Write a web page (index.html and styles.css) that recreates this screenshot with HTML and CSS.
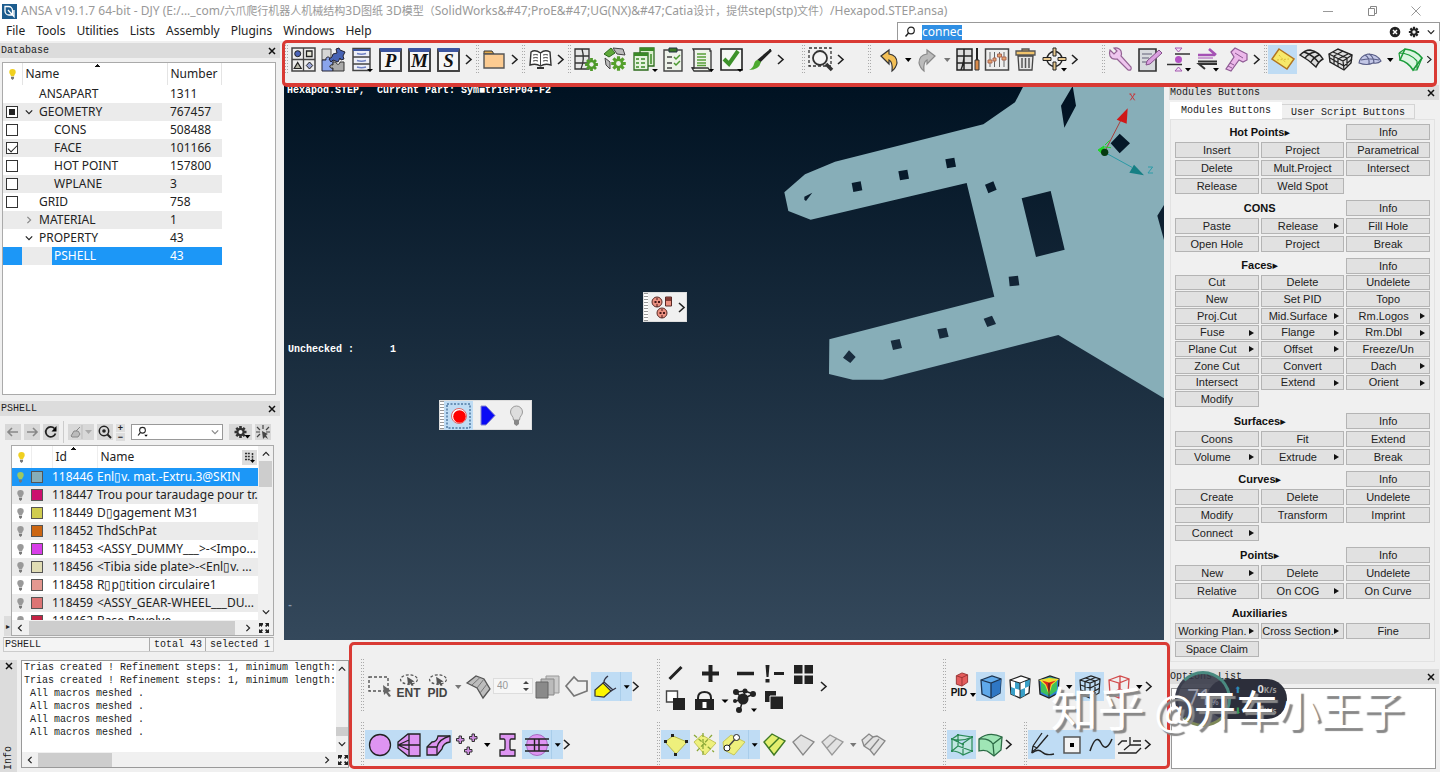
FILE: index.html
```
<!DOCTYPE html>
<html lang="en">
<head>
<meta charset="utf-8">
<title>ANSA</title>
<link rel="stylesheet" href="styles.css">
</head>
<body>
<svg class="defs" aria-hidden="true">
  <symbol id="chev" viewBox="0 0 12 29"><path d="M3 10l5 4.5-5 4.5" fill="none" stroke="#222" stroke-width="1.6"/></symbol>
  <symbol id="arr" viewBox="0 0 12 29"><path d="M3 13h6.500l-3.250 4z"/></symbol>
  <symbol id="x" viewBox="0 0 8 8"><path d="M1 1l6 6M7 1l-6 6" stroke="#111" stroke-width="1.500"/></symbol>
  <symbol id="bulb" viewBox="0 0 10 14"><path d="M5 1a3.600 3.600 0 0 0-3.600 3.600C1.400 6.500 3 7 3.200 9h3.600C7 7 8.600 6.500 8.600 4.600A3.600 3.600 0 0 0 5 1z" fill="currentColor"/><path d="M3.300 9.500h3.400v2L5 13l-1.700-1.500z" fill="#777"/></symbol>
  <symbol id="down" viewBox="0 0 10 10"><path d="M1 3l4 4 4-4" fill="none" stroke="currentColor" stroke-width="1.500"/></symbol>
  <symbol id="full" viewBox="0 0 10 10"><path d="M0 0h4v1.500L2.500 4 1.500 2.800 0 4zM10 0H6l1.200 1.500L6 3l1.200 1L8.500 2.800 10 4zM0 10h4L2.800 8.500 4 7.200 2.800 6 1.500 7.200 0 6zM10 10H6l1.200-1.500L6 7.200 7.200 6l1.300 1.200L10 6z" fill="#222"/></symbol>
  <symbol id="gear" viewBox="0 0 14 14"><path d="M7 1v12M1 7h12M2.800 2.800l8.400 8.400M11.200 2.800l-8.400 8.400" stroke="currentColor" stroke-width="2.600"/><circle cx="7" cy="7" r="4.200" fill="currentColor"/><circle cx="7" cy="7" r="2" fill="#f0f0f0"/></symbol>
</svg>

<header class="titlebar">
  <svg class="logo" viewBox="0 0 15 15"><path d="M0 0h15v15H0z" fill="#1c5c8e"/><path d="M3 2.500h3.500a4 4 0 0 1 4 4V11H7a4 4 0 0 1-4-4z M6 6l6 6.500V6" fill="none" stroke="#fff" stroke-width="1.300"/></svg>
  <span class="apptitle">ANSA v19.1.7 64-bit - DJY (E:/..._com/<span class="cjk">六爪爬行机器人机械结构</span>3D<span class="cjk">图纸</span> 3D<span class="cjk">模型（</span>SolidWorks&amp;#47;ProE&amp;#47;UG(NX)&amp;#47;Catia<span class="cjk">设计，提供</span>step(stp)<span class="cjk">文件）</span>/Hexapod.STEP.ansa)</span>
  <div class="winctl">
    <button aria-label="Minimize"><svg viewBox="0 0 10 10"><path d="M0 5.500h10" stroke="#999"/></svg></button>
    <button aria-label="Restore"><svg viewBox="0 0 10 10"><path d="M1.500 2.500h6v7h-6zM3.500 2V.5h6v7H8" fill="none" stroke="#888"/></svg></button>
    <button aria-label="Close"><svg viewBox="0 0 10 10"><path d="M.5.5l9 9M9.500.5l-9 9" stroke="#999"/></svg></button>
  </div>
</header>

<div class="menurow">
  <nav class="menu"><a href="#">File</a><a href="#">Tools</a><a href="#">Utilities</a><a href="#">Lists</a><a href="#">Assembly</a><a href="#">Plugins</a><a href="#">Windows</a><a href="#">Help</a></nav>
  <div class="search">
    <svg class="s12" viewBox="0 0 12 12"><circle cx="7" cy="4.500" r="3.300" fill="none" stroke="#222" stroke-width="1.200"/><path d="M4.600 7L1.500 10.500" stroke="#222" stroke-width="1.500"/></svg>
    <input class="query" value="connec" aria-label="Search">
    <span class="grow"></span>
    <svg class="s12" viewBox="0 0 12 12"><circle cx="6" cy="6" r="5.300" fill="#222"/><path d="M4 4l4 4M8 4L4 8" stroke="#fff" stroke-width="1.500"/></svg>
    <svg class="s12 cog" viewBox="0 0 14 14"><use href="#gear"/></svg>
    <svg class="s8" viewBox="0 0 10 10"><use href="#down"/></svg>
  </div>
</div>

<main class="work">
  <aside class="left">
    <section class="panel db">
      <h2 class="ptitle">Database<button aria-label="Close"><svg class="s8" viewBox="0 0 8 8"><use href="#x"/></svg></button></h2>
      <div class="dbbox">
        <table class="tree">
          <thead><tr><th><svg class="bulb lit" viewBox="0 0 10 14"><use href="#bulb"/></svg></th><th class="sorted">Name</th><th>Number</th></tr></thead>
          <tbody>
            <tr><td></td><td class="l1">ANSAPART</td><td>1311</td></tr>
            <tr><td><input type="checkbox" class="mixed" aria-label="GEOMETRY"></td><td class="l1"><svg class="s8 tw" viewBox="0 0 10 10"><use href="#down"/></svg>GEOMETRY</td><td>767457</td></tr>
            <tr><td><input type="checkbox" aria-label="CONS"></td><td class="l2">CONS</td><td>508488</td></tr>
            <tr><td><input type="checkbox" checked aria-label="FACE"></td><td class="l2">FACE</td><td>101166</td></tr>
            <tr><td><input type="checkbox" aria-label="HOT POINT"></td><td class="l2">HOT POINT</td><td>157800</td></tr>
            <tr><td><input type="checkbox" aria-label="WPLANE"></td><td class="l2">WPLANE</td><td>3</td></tr>
            <tr><td><input type="checkbox" aria-label="GRID"></td><td class="l1">GRID</td><td>758</td></tr>
            <tr><td></td><td class="l1"><svg class="s8 tw side" viewBox="0 0 10 10"><use href="#down"/></svg>MATERIAL</td><td>1</td></tr>
            <tr><td></td><td class="l1"><svg class="s8 tw" viewBox="0 0 10 10"><use href="#down"/></svg>PROPERTY</td><td>43</td></tr>
            <tr class="sel"><td></td><td class="l2">PSHELL</td><td>43</td></tr>
          </tbody>
        </table>
      </div>
    </section>
    <section class="panel ps">
      <h2 class="ptitle">PSHELL<button aria-label="Close"><svg class="s8" viewBox="0 0 8 8"><use href="#x"/></svg></button></h2>
      <div class="pstools">
        <button class="sq" aria-label="Back"><svg viewBox="0 0 16 16"><path d="M13 8H3M7 4L3 8l4 4" fill="none" stroke="#888" stroke-width="1.600"/></svg></button>
        <button class="sq" aria-label="Forward"><svg viewBox="0 0 16 16"><path d="M3 8h10M9 4l4 4-4 4" fill="none" stroke="#888" stroke-width="1.600"/></svg></button>
        <button class="sq" aria-label="Refresh"><svg viewBox="0 0 16 16"><path d="M12.500 9.500A5 5 0 1 1 11.500 4.500" fill="none" stroke="#222" stroke-width="1.800"/><path d="M13.500 2v5.500H8.500z"/></svg></button>
        <span class="bar"></span>
        <button class="sq wide" aria-label="Erase"><svg viewBox="0 0 26 16"><path d="M3 12l3-5 4 0 2 3-2 3H4zM8 7l4-4" fill="#bbb" stroke="#888"/><path d="M14 1v14" stroke="#bbb"/><path d="M17 6h7l-3.500 4z" fill="#aaa"/></svg></button>
        <button class="sq" aria-label="Zoom"><svg viewBox="0 0 16 16"><circle cx="7" cy="7" r="4.700" fill="none" stroke="#222" stroke-width="1.500"/><circle cx="7" cy="7" r="1.800" fill="#222"/><path d="M10.500 10.500L14 14" stroke="#222" stroke-width="2"/></svg></button>
        <div class="pm"><button aria-label="Expand">+</button><button aria-label="Collapse">−</button></div>
        <div class="combo"><svg viewBox="0 0 16 16"><circle cx="8" cy="6" r="3.300" fill="none" stroke="#222" stroke-width="1.200"/><path d="M5.700 8.500L3 12" stroke="#222" stroke-width="1.400"/><path d="M10 11h4l-2 2.500z"/></svg><input aria-label="Filter"><svg class="s8 dim" viewBox="0 0 10 10"><use href="#down"/></svg></div>
        <button class="sq mid" aria-label="Options"><svg viewBox="0 0 22 16"><g transform="translate(4 1)" color="#333"><use href="#gear" width="14" height="14"/></g><path d="M15 11h6l-3 3.500z"/></svg></button>
        <button class="sq" aria-label="Pick"><svg viewBox="0 0 16 16"><path d="M8 1v4M2 3l3 3M14 3l-3 3M1 8h4M15 8h-4M2 13l3-3" stroke="#444" stroke-width="1.200"/><path d="M7 7l1 8 2-2 3 2-2-4 2-1z" fill="#444"/></svg></button>
      </div>
      <div class="pswrap">
        <button class="nub" aria-label="Expand list">▸</button>
        <div class="list">
          <div class="lbody">
            <table class="props">
              <thead><tr><th><svg class="bulb lit" viewBox="0 0 10 14"><use href="#bulb"/></svg></th><th></th><th class="sorted">Id</th><th>Name<svg class="cols" viewBox="0 0 15 15"><path d="M0 0h15v15H0z" fill="#ddd"/><path d="M3 3.500h5M3 6.500h5M3 9.500h5M10.500 3v7" stroke="#333" stroke-width="1.500" stroke-dasharray="2 .8"/><path d="M8 10h5l-2.500 3z"/></svg></th></tr></thead>
              <tbody>
                <tr class="sel"><td><svg class="bulb glow" viewBox="0 0 10 14"><use href="#bulb"/></svg></td><td><i class="sw c1"></i></td><td>118446</td><td>Enl▯v. mat.-Extru.3@SKIN</td></tr>
                <tr><td><svg class="bulb" viewBox="0 0 10 14"><use href="#bulb"/></svg></td><td><i class="sw c2"></i></td><td>118447</td><td>Trou pour taraudage pour tr...</td></tr>
                <tr><td><svg class="bulb" viewBox="0 0 10 14"><use href="#bulb"/></svg></td><td><i class="sw c3"></i></td><td>118449</td><td>D▯gagement M31</td></tr>
                <tr><td><svg class="bulb" viewBox="0 0 10 14"><use href="#bulb"/></svg></td><td><i class="sw c4"></i></td><td>118452</td><td>ThdSchPat</td></tr>
                <tr><td><svg class="bulb" viewBox="0 0 10 14"><use href="#bulb"/></svg></td><td><i class="sw c5"></i></td><td>118453</td><td>&lt;ASSY_DUMMY___&gt;-&lt;Impo...</td></tr>
                <tr><td><svg class="bulb" viewBox="0 0 10 14"><use href="#bulb"/></svg></td><td><i class="sw c6"></i></td><td>118456</td><td>&lt;Tibia side plate&gt;-&lt;Enl▯v. ...</td></tr>
                <tr><td><svg class="bulb" viewBox="0 0 10 14"><use href="#bulb"/></svg></td><td><i class="sw c7"></i></td><td>118458</td><td>R▯p▯tition circulaire1</td></tr>
                <tr><td><svg class="bulb" viewBox="0 0 10 14"><use href="#bulb"/></svg></td><td><i class="sw c8"></i></td><td>118459</td><td>&lt;ASSY_GEAR-WHEEL___DU...</td></tr>
                <tr><td><svg class="bulb" viewBox="0 0 10 14"><use href="#bulb"/></svg></td><td><i class="sw c9"></i></td><td>118462</td><td>Base-Revolve</td></tr>
              </tbody>
            </table>
            <div class="vs"><svg class="s8 up" viewBox="0 0 10 10"><use href="#down"/></svg><span class="thumb t1"></span><span class="grow"></span><svg class="s8" viewBox="0 0 10 10"><use href="#down"/></svg></div>
          </div>
          <div class="hs"><svg class="s8 lf" viewBox="0 0 10 10"><use href="#down"/></svg><span class="thumb grow"></span><svg class="s8 side" viewBox="0 0 10 10"><use href="#down"/></svg><svg class="full" viewBox="0 0 10 10"><use href="#full"/></svg></div>
        </div>
      </div>
      <div class="status"><span class="grow">PSHELL</span><span>total 43</span><span>selected 1</span></div>
    </section>
  </aside>

  <div class="toolbar">
    <div class="tg">
      <button aria-label="Topo"><svg viewBox="0 0 29 29"><path d="M3 3h23v23H3z" fill="#eee" stroke="#444" stroke-width="1.500"/><path d="M14.500 3v23M3 14.500h23" stroke="#444" stroke-width="1.300"/><circle cx="8.700" cy="8.700" r="3" fill="#4a63b8" stroke="#222"/><path d="M17.500 6h5.500v5.500h-5.500z" fill="#e8e8d8" stroke="#222" stroke-width="1.300"/><path d="M8.700 17.500l3.500 6H5.200z" fill="#b8b8a8" stroke="#222" stroke-width="1.200"/><path d="M20.500 17l3.200 3.500-3.200 3.500-3.200-3.500z" fill="#9aa6d8" stroke="#222"/></svg></button>
      <button aria-label="Parts"><svg viewBox="0 0 29 29"><path d="M4 4h9v11H4z" fill="#d6d6d6" stroke="#555"/><path d="M4 15h4c-1-4 5-4 4 0h3v5c-4-1-4 4 0 3v3H4z" fill="#8aa4ec" stroke="#223"/><path d="M15 17h3c0 3 4 3 4 0h4v9H15v-3c-4 1-4-4 0-3z" fill="#aaa" stroke="#333"/><path d="M15 9l4-1-1-4 3-1 1 2 5 2-2 4 1 3-3 1-1-2-2 4-5-2-2 2-2-3 3-2z" fill="#4763b4" stroke="#223"/></svg></button>
      <button aria-label="Database"><svg viewBox="0 0 29 29"><path d="M6 3.500h17v22H6z" fill="#eef0f8" stroke="#444" stroke-width="1.500"/><path d="M6 4h17v2H6z" fill="#3d56a0"/><path d="M6 12h17M6 19h17" stroke="#444" stroke-width="1.500"/><path d="M10 8.500q4.500 1.500 9 0M10 15.500q4.500 1.500 9 0M10 22q4.500 1.500 9 0" fill="none" stroke="#6f82c4" stroke-width="1.400"/><path d="M20 24h6l-3 3z"/></svg></button>
      <button class="ltr" aria-label="Properties"><span>P</span></button><button class="ltr" aria-label="Materials"><span>M</span></button><button class="ltr" aria-label="Sets"><span>S</span></button>
      <svg class="more"><use href="#chev"/></svg>
    </div>
    <div class="tg">
      <button aria-label="Open"><svg viewBox="0 0 29 29"><path d="M4 6h8l2 3H4z" fill="#e0a84c" stroke="#333"/><path d="M4 9h20v14H4z" fill="#fccb91" stroke="#555" stroke-width="1.400"/></svg></button>
      <svg class="more"><use href="#chev"/></svg>
    </div>
    <div class="tg">
      <button aria-label="Help"><svg viewBox="0 0 29 29"><path d="M14.500 8Q9 4 5 7L4 20q6-2 10.500 1Q19 18 25 20L24 7q-5-3-9.500 1z" fill="#fff" stroke="#333" stroke-width="1.400"/><path d="M14.500 8v13M7 10q3-1 5 0M7 13q3-1 5 0M7 16q3-1 5 0M17 10q3-1 5 0M17 13q3-1 5 0M17 16q3-1 5 0" fill="none" stroke="#444"/><path d="M11 22h7v2h-7z" fill="#333"/></svg></button>
      <svg class="more"><use href="#chev"/></svg>
    </div>
    <div class="tg t15">
      <button aria-label="Mesh settings"><svg viewBox="0 0 29 29"><path d="M3 4h14v20H3zM10 4q3 10-1 20M3 11h14M3 18h14" fill="#e6e6e6" stroke="#333" stroke-width="1.300"/><g color="#4f9a2a" transform="translate(12 12)"><use href="#gear" width="15" height="15"/></g></svg></button>
      <button aria-label="Batch"><svg viewBox="0 0 29 29"><path d="M12 3l10 1 2 6-8-1zM4 13l5 4v7l-4-4z" fill="#bbb" stroke="#444"/><path d="M3 9l7-6 4 5-6 4z" fill="#5fa83a" stroke="#2d6b1d"/><g color="#55a02c" transform="translate(9 10)"><use href="#gear" width="17" height="17"/></g></svg></button>
      <button aria-label="Checks"><svg viewBox="0 0 29 29"><path d="M10 3h14v18H10z" fill="#dcefd0" stroke="#2d6b1d" stroke-width="1.300"/><path d="M10 3h14v3H10z" fill="#3a8a26"/><path d="M4 8h14v17H4z" fill="#e6f3de" stroke="#2d6b1d" stroke-width="1.300"/><path d="M4 8h14v3H4z" fill="#3a8a26"/><path d="M6 14h3M6 18h3M6 22h3M11 14h4M11 18h4M11 22h4M21 9v10" stroke="#3a8a26" stroke-width="1.500"/><path d="M22 24h6l-3 3z"/></svg></button>
      <button aria-label="Checklist"><svg viewBox="0 0 29 29"><path d="M5 5h18v21H5z" fill="#eef3ea" stroke="#444" stroke-width="1.400"/><path d="M10 3h8v4h-8z" fill="#3b7a25" stroke="#234"/><path d="M8 12h5M8 18h5M8 23h5" stroke="#444" stroke-width="1.400"/><path d="M15 12l2 2 4-4M15 18l2 2 4-4" fill="none" stroke="#4b9a30" stroke-width="1.500"/></svg></button>
      <button aria-label="Report"><svg viewBox="0 0 29 29"><path d="M5 4h17v2h1v20H6l-2-3h2V6z" fill="#eef3ea" stroke="#333" stroke-width="1.300"/><path d="M4 23h16l2 3" fill="none" stroke="#333" stroke-width="1.300"/><path d="M9 9h9M9 12h9M9 15h9M9 18h9M9 20.500h9" stroke="#58a03a" stroke-width="1.300"/><path d="M21 24h5l-2.500 3z"/></svg></button>
      <button aria-label="Validate"><svg viewBox="0 0 29 29"><path d="M4 4h21v21H4z" fill="#f4f7f4" stroke="#222" stroke-width="1.600"/><path d="M7 14l5 5L21 6" fill="none" stroke="#3c922a" stroke-width="4"/><path d="M20 24h6l-3 3z"/></svg></button>
      <button aria-label="Brush"><svg viewBox="0 0 29 29"><path d="M25 5L14 16l-1-1z" stroke="#222" stroke-width="2.500"/><path d="M15 17q-2 8-12 8 4-2 5-6t4-4z" fill="#4daa2f"/></svg></button>
      <svg class="more"><use href="#chev"/></svg>
    </div>
    <div class="tg t20">
      <button aria-label="Zoom area"><svg viewBox="0 0 29 29"><path d="M3 3h22v18H3z" fill="none" stroke="#333" stroke-width="1.300" stroke-dasharray="3 2"/><circle cx="14" cy="13" r="7" fill="#f4f4f4" stroke="#333" stroke-width="1.800"/><path d="M20 19l6 6" stroke="#333" stroke-width="3.500"/></svg></button>
      <svg class="more"><use href="#chev"/></svg>
    </div>
    <div class="tg t20 lead">
      <button aria-label="Undo"><svg viewBox="0 0 29 29"><path d="M6 11l8-6v4q8 1 8 9-1 5-5 8 1-9-3-11v4z" fill="#f2bf56" stroke="#333" stroke-width="1.200"/></svg></button>
      <svg class="drop slim"><use href="#arr" x="-2" width="12" height="29"/></svg>
      <button aria-label="Redo"><svg viewBox="0 0 29 29"><path d="M23 11l-8-6v4q-8 1-8 9 1 5 5 8-1-9 3-11v4z" fill="#bbb" stroke="#888" stroke-width="1.200"/></svg></button>
      <svg class="drop off"><use href="#arr"/></svg>
      <button aria-label="Settings"><svg viewBox="0 0 29 29"><path d="M4 4h15v21H4zM11 4v21M4 11h15M4 18h15M8 25q3-8 3-14" fill="#ddd" stroke="#222" stroke-width="1.500"/><path d="M24 3v12" stroke="#222" stroke-width="2"/><path d="M22 15h4v10h-4z" fill="#d88a4a" stroke="#333"/></svg></button>
      <button aria-label="Sliders"><svg viewBox="0 0 29 29"><path d="M3.500 4h23v21h-23z" fill="#eee" stroke="#444" stroke-width="1.500"/><path d="M8 7v15M12.500 7v15M17.500 7v15M22 7v15" stroke="#666"/><path d="M6 15h4v3H6zM11 13h3v3h-3zM15.500 9h4v3h-4zM20 12h4v3h-4z" fill="#e8a36a" stroke="#a65"/></svg></button>
      <button aria-label="Delete"><svg viewBox="0 0 29 29"><path d="M11 6V4h7v2M5 6h19v4H5z" fill="#f0c36b" stroke="#555" stroke-width="1.300"/><path d="M7 11h15l-1 14H8z" fill="#e4e4e4" stroke="#444" stroke-width="1.300"/><path d="M11 13v10M14.500 13v10M18 13v10" stroke="#555" stroke-width="1.500"/></svg></button>
      <button aria-label="Center"><svg viewBox="0 0 29 29"><circle cx="14.500" cy="14" r="7.500" fill="none" stroke="#222" stroke-width="1.500"/><g fill="#e9c98e" stroke="#222"><path d="M13 3h3v8h-3zM13 17h3v8h-3zM3 12.500h8v3H3zM18 12.500h8v3h-8z"/></g><path d="M21 23h6l-3 3.500z"/></svg></button>
      <svg class="more"><use href="#chev"/></svg>
    </div>
    <div class="tg">
      <button aria-label="Wrench"><svg viewBox="0 0 29 29"><path d="M4 5l4 4 3-3-3-3q5-1 7 3 1 3 0 5l10 11q1 4-3 3L11 14q-5 1-7-3-1-3 0-6z" fill="#eec6ee" stroke="#946394" stroke-width="1.200"/></svg></button>
      <button aria-label="Edit"><svg viewBox="0 0 29 29"><path d="M4 4h17v22H4z" fill="#d8dade" stroke="#333" stroke-width="1.600"/><path d="M7 9h10M7 13h7M7 17h5" stroke="#889" stroke-width="1.300"/><path d="M24 5l3 3-12 11-4 1 1-4z" fill="#dba0e0" stroke="#83508a"/></svg></button>
      <button aria-label="Align"><svg viewBox="0 0 29 29"><path d="M11 3h7l-3.500 4zM11 26h7l-3.500-4z" fill="#f0dcf4" stroke="#a55bb0"/><path d="M3 19.500h15M11 9h15" stroke="#333" stroke-width="1.600"/><circle cx="14.500" cy="14.500" r="3.500" fill="#b452c4"/><path d="M21 23h6l-3 3.500z"/></svg></button>
      <button aria-label="Swap"><svg viewBox="0 0 29 29"><path d="M5 10h17M16 4l7 6" fill="none" stroke="#a552b4" stroke-width="2.600"/><path d="M5 13h15" stroke="#a552b4"/><path d="M24 19H6l6 5M5 16.500h19" fill="none" stroke="#333" stroke-width="2"/><path d="M20 23h6l-3 3.500z"/></svg></button>
      <button aria-label="Bolt"><svg viewBox="0 0 29 29"><path d="M9 7l4-4 12 6v6l-4 2-4-2-8 11-5-2 8-12z" fill="#ecb8ea" stroke="#8e5a94" stroke-width="1.200"/><path d="M13 8l8 5M8 18l4 2M6 21l4 2" stroke="#8e5a94"/></svg></button>
      <svg class="more"><use href="#chev"/></svg>
    </div>
    <div class="tg">
      <button class="on" aria-label="Face"><svg viewBox="0 0 29 29"><path d="M11 4L26 14l-7 10L4 14z" fill="#f7e96a" stroke="#b27620" stroke-width="1.500"/><path d="M11 10l7 8M9 15l12-1" stroke="#dcbf3c" stroke-dasharray="2 1.500"/></svg></button>
      <button aria-label="Shell mesh"><svg viewBox="0 0 29 29"><path d="M3 10Q8 5 13 5q9 2 13 9-4 2-7 8Q12 15 3 10zM7 7q9 3 15 11M8 13q4-5 10-6M14 17q3-5 8-7" fill="#ddd" stroke="#222" stroke-width="1.400"/></svg></button>
      <button aria-label="Solid mesh"><svg viewBox="0 0 29 29"><path d="M3 9l9-5 14 6-1 8-7 7L4 17z" fill="#ddd" stroke="#222" stroke-width="1.400"/><path d="M3 9l14 7 9-6M17 16l1 9M7 7l14 6M8 11l9-5M12 14l10-5M8 11v8M12 14v8M4 13l14 8 8-7M21 13v8" fill="none" stroke="#222" stroke-width="1.200"/></svg></button>
      <button aria-label="Volume"><svg viewBox="0 0 29 29"><path d="M4 18q1-7 9-9 9 0 13 7-3 3-8 2-6 3-14 0zM10 10q5 3 4 9M6 15q9-2 18 0M14 9q5 3 5 9" fill="#c3c7e6" stroke="#5a5f88" stroke-width="1.100"/></svg></button>
      <svg class="drop"><use href="#arr"/></svg>
      <button aria-label="Morph"><svg viewBox="0 0 29 29"><path d="M4 15L9 4q11 1 17 9l-9 12Q12 17 4 15z" fill="#dcf5e2" stroke="#1b9c3a" stroke-width="1.600"/><path d="M3 8l6-4M26 13l-5 12-4 0M3 8q11 0 18 8M3 8l1 7M21 16l0 9" fill="none" stroke="#1b9c3a" stroke-width="1.200"/></svg></button>
      <svg class="more slim"><use href="#chev"/></svg>
    </div>
  </div>

  <section class="view">
    <p class="vtext">Hexapod.STEP,  Current Part: Sym■trieFP04-F2</p>
    <p class="vtext unchecked">Unchecked :      1</p>
    <p class="vtext dash">-</p>
    <svg class="model" viewBox="0 0 1182 945">
      <path fill="#87aeb8" fill-rule="evenodd" d="M762 0L735 52 640 118 195 230 105 268 43 322 55 378 122 404 590 294 673 635 178 763 177 867 248 884 338 884 865 750 1182 940V0zM755 340L842 318 884 494 798 516zM908 3L918 62 883 128 873 62zM1049 146L1080 175 1049 205 1022 175zM1182 360L1162 392 1182 465zM245 294l27-5 5 27-27 5zM385 259l27-5 5 27-27 5zM526 223l27-5 5 27-27 5zM645 299l25-10 10 25-25 11zM716 575l28-3 4 29-29 3zM641 701l25-9 12 25-26 9zM502 733l27-5 7 27-27 6zM362 767l27-5 7 27-27 6zM237 796l20 20-16 18-22-16zM103 335l24-12-19 25-5-4z"/>
      <path d="M1004 200L1054 103" stroke="#a8403c" stroke-width="3"/><path d="M1073 70l-3 46-30-12z" fill="#d01818"/>
      <path d="M1004 202L1086 247" stroke="#2b9aa6" stroke-width="3"/><path d="M1122 271l-44-8 14-24z" fill="#157f84"/>
      <path d="M984 195l18-12v28zM1005 180l14-14M1005 186l18 2" fill="#22d62a" stroke="#22d62a" stroke-width="3"/><circle cx="1004" cy="202" r="11" fill="#063a10"/>
      <path d="M1081 27l13 19M1094 27l-13 19M1078 27h6M1090 27h6" stroke="#c8363a" stroke-width="3"/><path d="M1134 246h14l-14 18h15" fill="none" stroke="#2c9ca8" stroke-width="3"/>
    </svg>
    <div class="float f1"><i class="grip"></i><button aria-label="Spotwelds"><svg viewBox="0 0 29 29"><g fill="#ea9080" stroke="#5a2a26"><circle cx="9" cy="9" r="5"/><circle cx="14" cy="20" r="5"/><path d="M17.500 4h6v9h-6z"/></g><path d="M18 4h5v4h-5z" fill="#843c36"/><path d="M9 5v2M9 11v3M14 16v2M14 22v3" stroke="#4a1a1a"/><path d="M6.500 9h2M10 9h2M11.500 20h2M15 20h2" stroke="#4a1a1a" stroke-width="2"/></svg></button><svg class="more slim"><use href="#chev" x="-1" width="12" height="29"/></svg></div>
    <div class="float f2"><i class="grip"></i><button class="on" aria-label="Record"><svg viewBox="0 0 29 29"><path d="M3 3h23v24H3z" fill="none" stroke="#16497a" stroke-dasharray="2 1.500"/><circle cx="15" cy="15" r="7.500" fill="#fff" stroke="#d66"/><circle cx="15.500" cy="15.500" r="6.300" fill="red"/></svg></button><button aria-label="Play"><svg viewBox="0 0 29 29"><path d="M8 5h5l9 9.500-9 9.500H8z" fill="#0a0af5" stroke="#88c"/></svg></button><button aria-label="Light"><svg viewBox="0 0 29 29"><path d="M14.500 5a6 6 0 0 0-6 6c0 3.500 3 4 3 8h6c0-4 3-4.500 3-8a6 6 0 0 0-6-6z" fill="#ddd" stroke="#999"/><path d="M12 19h5v4l-2.500 2-2.500-2z" fill="#888"/></svg></button></div>
  </section>

  <aside class="right">
    <section class="panel">
      <h2 class="ptitle">Modules Buttons<button aria-label="Close"><svg class="s8" viewBox="0 0 8 8"><use href="#x"/></svg></button></h2>
      <div class="tabs"><button class="act">Modules Buttons</button><button>User Script Buttons</button></div>
      <div class="mods">
        <div class="mg"><h3>Hot Points▸</h3><button>Info</button><button>Insert</button><button>Project</button><button>Parametrical</button><button>Delete</button><button>Mult.Project</button><button>Intersect</button><button>Release</button><button>Weld Spot</button></div>
        <div class="mg"><h3>CONS</h3><button>Info</button><button>Paste</button><button class="sub">Release</button><button>Fill Hole</button><button>Open Hole</button><button>Project</button><button>Break</button></div>
        <div class="mg fit"><h3>Faces▸</h3><button>Info</button><button>Cut</button><button>Delete</button><button>Undelete</button><button>New</button><button>Set PID</button><button>Topo</button><button>Proj.Cut</button><button class="sub">Mid.Surface</button><button class="sub">Rm.Logos</button><button class="sub">Fuse</button><button class="sub">Flange</button><button class="sub">Rm.Dbl</button><button class="sub">Plane Cut</button><button class="sub">Offset</button><button>Freeze/Un</button><button>Zone Cut</button><button>Convert</button><button class="sub">Dach</button><button>Intersect</button><button class="sub">Extend</button><button class="sub">Orient</button><button>Modify</button></div>
        <div class="mg"><h3>Surfaces▸</h3><button>Info</button><button>Coons</button><button>Fit</button><button>Extend</button><button class="sub">Volume</button><button class="sub">Extrude</button><button>Break</button></div>
        <div class="mg"><h3>Curves▸</h3><button>Info</button><button>Create</button><button>Delete</button><button>Undelete</button><button>Modify</button><button>Transform</button><button>Imprint</button><button class="sub">Connect</button></div>
        <div class="mg"><h3>Points▸</h3><button>Info</button><button class="sub">New</button><button>Delete</button><button>Undelete</button><button>Relative</button><button class="sub">On COG</button><button>On Curve</button></div>
        <div class="mg"><h3 class="solo">Auxiliaries</h3><button class="sub">Working Plan.</button><button class="sub">Cross Section.</button><button>Fine</button><button>Space Claim</button></div>
      </div>
    </section>
    <section class="opts">
      <h2 class="ptitle">Options List<button aria-label="Close"><svg class="s8" viewBox="0 0 8 8"><use href="#x"/></svg></button></h2>
      <div class="optbox"></div>
    </section>
  </aside>

  <section class="info">
    <div class="istrip"><button aria-label="Close"><svg class="s8" viewBox="0 0 8 8"><use href="#x"/></svg></button><span>Info</span></div>
    <div class="ibox">
      <div class="irow">
        <pre>Trias created ! Refinement steps: 1, minimum length:
Trias created ! Refinement steps: 1, minimum length:
 All macros meshed .
 All macros meshed .
 All macros meshed .
 All macros meshed .</pre>
        <div class="vs"><svg class="s8 up" viewBox="0 0 10 10"><use href="#down"/></svg><span class="grow"></span><span class="thumb t2"></span><svg class="s8" viewBox="0 0 10 10"><use href="#down"/></svg></div>
      </div>
      <div class="hs"><svg class="s8 lf" viewBox="0 0 10 10"><use href="#down"/></svg><span class="thumb t3"></span><span class="grow"></span><svg class="s8 side" viewBox="0 0 10 10"><use href="#down"/></svg><svg class="full" viewBox="0 0 10 10"><use href="#full"/></svg></div>
    </div>
  </section>

  <section class="bottom">
    <div class="bg">
      <button aria-label="Box select"><svg viewBox="0 0 29 29"><path d="M4 5h19v14H4z" fill="none" stroke="#555" stroke-width="1.400" stroke-dasharray="3 2"/><path d="M18 13l1 10 2-2 3 4 2-1-3-4 3-1z" fill="#666"/></svg></button>
      <button class="cap" aria-label="Select entities"><svg viewBox="0 0 29 16"><ellipse cx="15" cy="8" rx="9" ry="5" fill="none" stroke="#555" stroke-width="1.300" stroke-dasharray="3 2"/><path d="M13 5l1 9 2-2 2 3 2-1-2-3 3-1z" fill="#555"/></svg><b>ENT</b></button>
      <button class="cap" aria-label="Select PID"><svg viewBox="0 0 29 16"><ellipse cx="15" cy="8" rx="9" ry="5" fill="none" stroke="#555" stroke-width="1.300" stroke-dasharray="3 2"/><path d="M13 5l1 9 2-2 2 3 2-1-2-3 3-1z" fill="#555"/></svg><b>PID</b></button>
      <svg class="drop off"><use href="#arr"/></svg>
      <button aria-label="Feature angle"><svg viewBox="0 0 29 29"><path d="M3 11l9-7 8 3 6 10-7 9-6-10z" fill="#bdbdbd" stroke="#555" stroke-width="1.300"/><path d="M13 16l7-9M8 13l8-7.500M16 21l7-9" fill="none" stroke="#777"/></svg></button>
      <div class="spin"><input value="40" aria-label="Angle"><svg viewBox="0 0 8 14"><path d="M1 5h6L4 2zM1 9h6l-3 3z" fill="#444"/></svg></div>
      <button aria-label="Layers"><svg viewBox="0 0 29 29"><path d="M13 4h13v17H13z" fill="#ccc" stroke="#999"/><path d="M8 7h13v16H8z" fill="#bbb" stroke="#888"/><path d="M3 10h12v16H3z" fill="#8a8a8a" stroke="#666"/></svg></button>
      <button aria-label="Polygon"><svg viewBox="0 0 29 29"><path d="M4 14l8-9 4 4h9v10l-13 5z" fill="none" stroke="#777" stroke-width="1.700"/></svg></button>
      <button class="on" aria-label="Lasso"><svg viewBox="0 0 29 29"><path d="M4 24v-6l8-7 8 8-7 6z" fill="#fdf600" stroke="#333" stroke-width="1.200"/><path d="M12 11l1-1q0-3 4-6M20 19l5-3M13 10l9 8" fill="none" stroke="#334" stroke-width="1.300"/></svg></button><svg class="drop on"><use href="#arr"/></svg>
      <svg class="more slim"><use href="#chev" x="-2" width="12" height="29"/></svg>
    </div>
    <div class="bg two">
      <div class="duo">
        <svg viewBox="0 0 29 29"><path d="M8.500 20l12-12" stroke="#222" stroke-width="3"/></svg>
        <svg viewBox="0 0 29 29"><path d="M6 14.500h17M14.500 6v17" stroke="#222" stroke-width="4"/></svg>
        <svg viewBox="0 0 29 29"><path d="M6 14.500h17" stroke="#222" stroke-width="3.500"/></svg>
        <svg viewBox="0 0 29 29"><path d="M5.500 6h4l-1 12h-2zM5.500 20h4v3.500h-4zM14 13h10v3H14z" fill="#222"/></svg>
        <svg viewBox="0 0 29 29"><path d="M5 6h8.500v8.500H5zM15.500 6H24v8.500h-8.500zM5 16.500h8.500V25H5zM15.500 16.500H24V25h-8.500z" fill="#222"/></svg>
        <svg viewBox="0 0 29 29"><path d="M5.500 5h11v11h-11z" fill="#fff" stroke="#444" stroke-width="1.400"/><path d="M12 12h12v12H12z" fill="#222"/></svg>
        <svg viewBox="0 0 41 29"><path d="M5 13h19v11H5z" fill="#222"/><path d="M8 14v-2q0-6 6.500-6t6.500 6v2" fill="none" stroke="#222" stroke-width="2"/><path d="M12.500 16h4v6h-4z" fill="#fff"/><path d="M31.500 13.500h7L35 17z"/></svg>
        <svg viewBox="0 0 29 29"><path d="M12 13L5 6 14 5l-2 8 10-5M14 5l8 3M12 13l-7 2M12 13L9 24" stroke="#222" stroke-width="1.500" fill="none"/><g fill="#222"><circle cx="12" cy="13" r="5.500"/><circle cx="5" cy="6" r="3"/><circle cx="14" cy="5" r="2.500"/><circle cx="22" cy="8" r="3"/><circle cx="4" cy="15" r="2"/><circle cx="8" cy="24" r="3"/></g><path d="M20 22.500h6L23 26z"/></svg>
        <svg viewBox="0 0 29 29"><path d="M5 5h11v11H5z" fill="#222"/><path d="M10 10h13.500v13.500H10z" fill="#222" stroke="#f0f0f0"/></svg>
      </div>
      <svg class="more"><use href="#chev"/></svg>
    </div>
    <div class="bg three">
      <button class="cap sm" aria-label="Color by PID"><svg viewBox="0 0 29 16"><path d="M9 4l6-3 6 2v8l-6 4-6-2z" fill="#e45c5c" stroke="#933"/><path d="M9 4l6 2 6-3M15 6v9" fill="none" stroke="#933"/></svg><b>PID</b><svg class="tick" viewBox="0 0 6 4"><path d="M0 0h6L3 4z"/></svg></button>
      <button class="on" aria-label="Shaded"><svg viewBox="0 0 29 29"><path d="M5 8l11-4 9 3-1 14-9 5-9-4z" fill="#5fa9ea" stroke="#1d3450" stroke-width="1.300"/><path d="M15 11l10-4-1 14-9 5z" fill="#2f77c4"/><path d="M5 8l10 3 10-4M15 11v15" fill="none" stroke="#1d3450" stroke-width="1.300"/></svg></button>
      <button aria-label="Checker"><svg viewBox="0 0 29 29"><path d="M5 8l11-4 9 3-1 14-9 5-9-4z" fill="#fff" stroke="#222" stroke-width="1.300"/><path d="M10 9.500l5 1.500v7l-5-1.500zM6 15l4 1.500V24l-4-2zM15 18l5-2v7.500l-5 2.500zM20 9l5-2-.5 7-4.500 2z" fill="#3aa0c8"/><path d="M5 8l10 3 10-4M15 11v15" fill="none" stroke="#222"/></svg></button>
      <button aria-label="Contour"><svg viewBox="0 0 29 29"><path d="M5 8l11-4 9 3-1 14-9 5-9-4z" fill="#2f7fd6" stroke="#222" stroke-width="1.300"/><path d="M7 8.500L16 5l7 2.500v11L15 24l-8-4z" fill="#3fc15a"/><path d="M5 8l10-2 10 1-7 6-3 10-4-10z" fill="#f2df2c"/><path d="M8 8.500l7 2 7-2-5 4-2 8-3-8z" fill="#dd2b1c"/><path d="M15 11v15" stroke="#222"/></svg></button>
      <svg class="drop"><use href="#arr"/></svg>
      <button class="on" aria-label="Wire mesh"><svg viewBox="0 0 29 29"><path d="M5 8l11-4 9 3-1 14-9 5-9-4zM5 8l10 3 10-4M15 11v15M5.500 13l9.500 3 9.500-4.500M6 18l9 3.500 9-5M10 9.500v14M20 9v14M10.500 6l10 3M20.500 5.500l-10.500 4" fill="none" stroke="#222" stroke-width="1.200"/></svg></button>
      <button aria-label="Wireframe"><svg viewBox="0 0 29 29"><path d="M5 8l11-4 9 3-1 14-9 5-9-4zM5 8l10 3 10-4M15 11v15M16 4v13L6 22M16 17l8 4" fill="none" stroke="#d24b4b" stroke-width="1.300"/></svg></button>
      <svg class="drop"><use href="#arr"/></svg><svg class="more slim"><use href="#chev" x="-2" width="12" height="29"/></svg>
    </div>
    <div class="bg">
      <button class="on" aria-label="Circle"><svg viewBox="0 0 29 29"><circle cx="15" cy="15" r="10.500" fill="#de94f2" stroke="#222" stroke-width="1.300"/></svg></button>
      <button class="on" aria-label="Split face"><svg viewBox="0 0 29 29"><path d="M4 12l10-8h12v22H14L4 18z" fill="#de94f2" stroke="#222" stroke-width="1.300"/><path d="M15 4v22M4 15h22M4 15l11-5M4 15l11 5" fill="none" stroke="#222" stroke-width="1.300"/></svg></button>
      <button class="on" aria-label="Extrude"><svg viewBox="0 0 29 29"><path d="M4 17l5-5q5 0 6-6h12v6q-7 1-8 7l-5 6H4z" fill="#de94f2" stroke="#222" stroke-width="1.300"/><path d="M4 17h10q2-8 13-11M14 17v8" fill="none" stroke="#222" stroke-width="1.300"/></svg></button>
      <button aria-label="Points"><svg viewBox="0 0 29 29"><path id="pl" d="M7 6h2.500v2.500H12V11H9.500v2.500H7V11H4.500V8.500H7z" fill="#cf8ee0" stroke="#333"/><use href="#pl" x="13" y="-2"/><use href="#pl" x="8" y="11"/></svg></button>
      <svg class="drop"><use href="#arr"/></svg>
      <button aria-label="Beam"><svg viewBox="0 0 29 29"><path d="M7 4h15v5h-4q-1 0-1 2v7q0 2 1 2h4v6H7v-6h4q1 0 1-2v-7q0-2-1-2H7z" fill="#de94f2" stroke="#222" stroke-width="1.300"/></svg></button>
      <button class="on" aria-label="Cross section"><svg viewBox="0 0 29 29"><circle cx="15" cy="15" r="10.500" fill="#de94f2" stroke="#a66cc0"/><path d="M3 9h24M3 15h24M3 21h24M12.500 9v12M17 9v12" stroke="#222" stroke-width="1.400"/></svg></button><svg class="drop on"><use href="#arr"/></svg>
      <svg class="more slim"><use href="#chev" x="-2" width="12" height="29"/></svg>
    </div>
    <div class="bg">
      <button class="on" aria-label="Face points"><svg viewBox="0 0 29 29"><path d="M4 12l8-6 14 6-11 12z" fill="#eef07c" stroke="#b8b94a"/><path d="M3 10h3v3H3zM10 4h3v3h-3zM24 10h3v3h-3zM13 23h3v3h-3z" fill="#222"/></svg></button>
      <button aria-label="Face project"><svg viewBox="0 0 29 29"><path d="M4 12l8-7 14 8-11 12z" fill="#eef07c" stroke="#c3c45a"/><path d="M4 5l20 17M22 5L6 22M13 3v22" stroke="#8aa836" stroke-width="1.300" stroke-dasharray="4 2"/></svg></button>
      <button class="on" aria-label="Face cut"><svg viewBox="0 0 29 29"><path d="M4 12l8-7 14 7-11 13-10-5z" fill="#eef07c" stroke="#c3c45a"/><path d="M8 18L18 7" stroke="#444" stroke-width="1.500"/><circle cx="17.500" cy="7.500" r="3" fill="#fff" stroke="#222"/><circle cx="8" cy="18" r="3" fill="#fff" stroke="#222"/></svg></button><svg class="drop on"><use href="#arr"/></svg>
      <button aria-label="Face join"><svg viewBox="0 0 29 29"><path d="M4 12l8-8 13 7-11 14z" fill="#e3ef6e" stroke="#3f7a24" stroke-width="1.400"/><path d="M9 18L19 8" stroke="#3f7a24" stroke-width="1.400"/></svg></button>
      <button aria-label="Face plain"><svg viewBox="0 0 29 29"><path d="M4 12l8-7 13 7-11 13z" fill="#e2e2e2" stroke="#888" stroke-width="1.300"/></svg></button>
      <button aria-label="Face split"><svg viewBox="0 0 29 29"><path d="M4 12l8-7 13 7-11 13zM9 18L19 8" fill="#e2e2e2" stroke="#999" stroke-width="1.300"/></svg></button>
      <svg class="drop off"><use href="#arr"/></svg>
      <button aria-label="Face release"><svg viewBox="0 0 29 29"><path d="M3 10l7-6 4 3 4-1 8 5-11 14-4-5-6-4z" fill="#e2e2e2" stroke="#888" stroke-width="1.300"/><path d="M5 16l9-9M11 20l9-11" stroke="#888" stroke-width="1.300"/></svg></button>
    </div>
    <div class="pair three">
      <div class="bg">
        <button class="on" aria-label="Box points"><svg viewBox="0 0 29 29"><path d="M5 9q10 3 20-2v14l-9 4q-5-4-11-4zM5 9l10 5 10-7M16 14v11M11 5v11l-6 5M11 16l14 5M5 9l6-4 14 2" fill="#c3efd0" fill-opacity=".5" stroke="#2a8a58" stroke-width="1.200"/><path d="M4 8h2v2H4zM24 6h2v2h-2zM4 20h2v2H4zM24 20h2v2h-2zM15 13h2v2h-2zM10 4h2v2h-2z" fill="#2a8a58"/></svg></button>
        <button aria-label="Box shaded"><svg viewBox="0 0 29 29"><path d="M3 9q10-8 23-2l-1 13-7 6-4-3q-4-4-11-2z" fill="#9fe5b5" stroke="#2c6b45" stroke-width="1.300"/><path d="M3 9q10-1 14 5l9-7M17 14l1 11" fill="none" stroke="#2c6b45" stroke-width="1.300"/></svg></button>
        <svg class="more slim"><use href="#chev" x="-2" width="12" height="29"/></svg>
      </div>
      <div class="bg">
        <button class="on" aria-label="Sketch"><svg viewBox="0 0 29 29"><path d="M5 16L14 3M9 18L20 5M5 16l-1 6 5-4M5 16l4 2" fill="none" stroke="#222" stroke-width="1.300"/><path d="M4 23q6-5 10-1t12 2" fill="none" stroke="#222" stroke-width="1.300"/></svg></button>
        <button class="on" aria-label="Point"><svg viewBox="0 0 29 29"><path d="M7 7h16v16H7z" fill="#f4f4f4" stroke="#555" stroke-width="1.500"/><path d="M13 13h4v4h-4z"/></svg></button>
        <button class="on" aria-label="Curve"><svg viewBox="0 0 29 29"><path d="M4 21q6-18 11-8t11-4" fill="none" stroke="#222" stroke-width="1.500"/></svg></button>
        <button aria-label="Plane"><svg viewBox="0 0 29 29"><path d="M12 11H7l-4 4M3 23h18l5-5M15 7v8l-6 5M15 15h11M18 11h8" fill="none" stroke="#222" stroke-width="1.300"/></svg></button>
        <svg class="more slim"><use href="#chev" x="-2" width="12" height="29"/></svg>
      </div>
    </div>
  </section>
</main>

<div class="meter">
  <div class="pill"><span><i class="u">⬆</i>0<small>K/s</small></span><span><i class="d">⬇</i>0<small>K/s</small></span></div>
  <div class="disc"><span>71<small>%</small></span></div>
</div>
<div class="mark"><span class="zh">知乎</span> @开车小王子</div>
</body>
</html>
```
FILE: styles.css
```
* { box-sizing: border-box; }
body { margin: 0; min-height: 100vh; display: flex; flex-direction: column; position: relative; background: #f0f0f0; color: #222; font: 12px/18px "Noto Sans", "Noto Sans CJK SC", sans-serif; overflow: hidden; }
button { font: inherit; color: inherit; border: 0; padding: 0; margin: 0; background: none; }
input { font: inherit; color: inherit; border: 0; padding: 0; margin: 0; min-width: 0; outline: 0; }
h2, h3, p, pre { margin: 0; font-weight: normal; }
svg { display: block; flex: none; }
.defs { position: absolute; width: 0; height: 0; }
.grow { flex: 1; }
.s8 { width: 8px; height: 8px; }
.s12 { width: 12px; height: 12px; }

.titlebar { display: flex; align-items: center; height: 22px; background: #fff; color: #999; padding-left: 2px; }
.logo { width: 15px; height: 15px; margin-right: 4px; }
.apptitle { flex: 1; white-space: nowrap; overflow: hidden; }
.cjk { font-size: 11px; }
.winctl { display: flex; gap: 34px; padding-right: 19px; }
.winctl svg { width: 10px; height: 10px; }
.menurow { display: flex; height: 19px; background: #fff; }
.menu { display: flex; flex: 1; gap: 11px; padding-left: 6px; }
.menu a { color: #222; text-decoration: none; }
.search { display: flex; align-items: center; width: 543px; border: 1px solid #999; border-bottom: 0; padding: 0 4px 0 6px; background: #fff; }
.query { width: 40px; height: 15px; margin-left: 6px; background: #2f8fe4; color: #fff; }
.cog { margin: 0 7px; }

.work { flex: 1; display: grid; grid-template-columns: 282px 67px 1fr 271px; grid-template-rows: 44px 1fr 132px; }
.left { grid-area: 1 / 1 / 3 / 2; display: flex; flex-direction: column; padding: 2px 2px 0 0; margin-bottom: -12px; }
.toolbar { grid-area: 1 / 2 / 2 / 5; }
.view { grid-area: 2 / 2 / 3 / 4; }
.right { grid-area: 2 / 4 / 4 / 5; }
.info { grid-area: 3 / 1 / 4 / 3; }
.bottom { grid-area: 3 / 3 / 4 / 4; }

.ptitle { display: flex; align-items: center; justify-content: space-between; height: 15px; padding: 0 4px 0 1px; background: #dcdcdc; font: 10px/15px "Liberation Mono", monospace; }
.db { flex: 1; display: flex; flex-direction: column; }
.dbbox { flex: 1; margin: 4px 4px 6px 2px; border: 1px solid #aaa; background: #fff; }
table { border-collapse: collapse; table-layout: fixed; }
td, th { padding: 0; font-weight: normal; text-align: left; white-space: nowrap; height: 18px; line-height: 18px; }
.tree { width: 219px; }
.tree th { height: 22px; border-right: 1px solid #e4e4e4; padding-left: 3px; }
.tree th:first-child { width: 19px; padding-left: 5px; }
.tree th:nth-child(2) { width: 145px; }
.tree tbody tr:nth-child(even) { background: #ebebeb; }
.tree td:last-child { padding-left: 3px; }
.tree .l1 { padding-left: 17px; }
.tree .l2 { padding-left: 32px; }
.sorted { background: conic-gradient(from 135deg at 50% 0, #111 90deg, transparent 0) 72px 1px / 5px 3px no-repeat; }
.props .sorted { background-position: 18px 1px; }
.tw { float: left; margin: 5px 0 0 -14px; }
.side { transform: rotate(-90deg); }
.tw.side { color: #888; }
.up { transform: rotate(180deg); }
.lf { transform: rotate(90deg); }
.tree .sel td { background: #1c97f7; color: #fff; }
.tree .sel .l2 { background: linear-gradient(90deg, #ebebeb 30px, #1c97f7 30px); }
.bulb { width: 9px; height: 13px; color: #999; }
.bulb.lit { color: #f0d020; }
.bulb.glow { color: #9fc860; }
input[type=checkbox] { appearance: none; display: block; width: 12px; height: 12px; margin-left: 3px; border: 1px solid #333; background: #fff; }
.mixed::before { content: ""; display: block; width: 6px; height: 6px; margin: 2px; background: #222; }
input:checked::before { content: ""; display: block; width: 8px; height: 4px; margin: 2px 1px; border: solid #222; border-width: 0 0 1px 1px; transform: rotate(-45deg); }

.pstools { display: flex; align-items: center; height: 26px; margin-top: 3px; padding: 0 9px 0 5px; gap: 3px; }
.sq { width: 16px; height: 16px; background: #d8d8d8; }
.sq svg { width: 100%; height: 16px; }
.sq.wide { width: 26px; }
.sq.mid { width: 23px; margin-left: 3px; }
.bar { width: 1px; height: 22px; background: #ccc; margin: 0 1px; }
.pm { display: flex; flex-direction: column; gap: 1px; }
.pm button { width: 9px; height: 8px; background: #ddd; font: bold 9px/8px "Liberation Sans", sans-serif; }
.combo { flex: 1; display: flex; align-items: center; height: 16px; border: 1px solid #999; background: #fff; margin-left: 3px; padding: 0 3px; }
.combo svg:first-child { width: 15px; height: 14px; }
.combo input { flex: 1; width: 20px; height: 12px; background: none; }
.dim { color: #888; }
.pswrap { display: flex; align-items: flex-end; }
.nub { width: 7px; height: 20px; margin-left: 4px; background: #ddd; font-size: 8px; }
.list { flex: 1; margin-right: 6px; border: 1px solid #aaa; background: #fff; }
.lbody { display: flex; height: 174px; overflow: hidden; }
.props { flex: 1; width: 100%; min-width: 0; align-self: flex-start; }
.props th { height: 22px; position: relative; border-right: 1px solid #eee; padding-left: 3px; }
.props th:nth-child(1) { width: 19px; padding-left: 5px; }
.props th:nth-child(2) { width: 21px; }
.props th:nth-child(3) { width: 45px; }
.props th:last-child { border: 0; }
.cols { position: absolute; right: 1px; top: 4px; width: 15px; height: 15px; }
.props td:first-child { padding-left: 4px; }
.props tbody tr:nth-child(even) { background: #ebebeb; }
.props .sel { background: #1c97f7; color: #fff; }
.sw { display: block; width: 12px; height: 12px; border: 1px solid #555; }
.c1 { background: #87aeb8; } .c2 { background: #cc0e6e; } .c3 { background: #d0cc50; }
.c4 { background: #cc6612; } .c5 { background: #d83ee8; } .c6 { background: #e0dcb4; }
.c7 { background: #e49890; } .c8 { background: #dc7474; } .c9 { background: #c42244; }
.vs { flex: none; width: 15px; display: flex; flex-direction: column; align-items: center; padding: 4px 0; background: #f0f0f0; }
.hs { display: flex; align-items: center; height: 15px; padding: 0 4px; background: #f0f0f0; }
.thumb { background: #cdcdcd; }
.t1 { width: 13px; height: 26px; margin-top: 3px; }
.t2 { width: 12px; height: 9px; margin-bottom: 4px; }
.t3 { width: 74px; height: 14px; margin-left: 4px; }
.hs .thumb.grow { height: 14px; margin: 0 9px 0 5px; }
.full { width: 10px; height: 10px; margin-left: 7px; }
.status { display: flex; height: 15px; margin: 1px 6px 0 3px; border: 1px solid #ccc; border-top-color: #aaa; font: 10px/13px "Liberation Mono", monospace; background: #f4f4f4; padding-left: 1px; }
.status span + span { border-left: 1px solid #aaa; padding: 0 3px 0 4px; }

.toolbar { display: flex; gap: 1px; padding-top: 2px; border: 3px solid #d93a34; border-bottom-width: 4px; border-radius: 5px; margin: -1px 3px -2px 0; position: relative; z-index: 2; background: #f0f0f0; }
.tg, .bg { display: flex; align-items: center; }
.tg { align-items: flex-start; }
.tg::before, .bg::before { content: ""; flex: none; align-self: stretch; width: 3px; margin-right: 1px; background: repeating-linear-gradient(#aaa 0 1px, transparent 1px 3px) 0 0 / 1px, repeating-linear-gradient(#aaa 0 1px, transparent 1px 3px) 2px 0 / 1px; background-repeat: no-repeat; }
.tg::before { height: 30px; }
.t15 { margin-right: 14px; }
.t20 { margin-right: 20px; }
.lead::before { margin-right: 4px; }
.toolbar button, .bg button, .float button { width: 29px; height: 29px; flex: none; }
.toolbar button svg, .bg button svg, .float button svg { width: 29px; height: 29px; }
.on { background: #bfdcf4; }
.more, .drop { width: 12px; height: 29px; }
.more.slim { width: 9px; }
.drop.slim { width: 8px; }
.off { fill: #777; }
.ltr span { display: block; width: 23px; height: 24px; margin: 2px 3px; border: 2px solid #444; border-top: 4px solid #3d56a0; border-radius: 1px; background: #f6f6f6; font: italic bold 19px/18px "Liberation Serif", serif; text-align: center; color: #111; }

.view { position: relative; margin: 0 5px 0 2px; overflow: hidden; background: linear-gradient(#001222, #34485b); }
.vtext { position: absolute; left: 3px; top: 0; color: #fff; font: bold 10px/11px "Liberation Mono", monospace; white-space: pre; }
.unchecked { left: 4px; top: 259px; }
.dash { top: 515px; color: #89a; }
.model { position: absolute; right: 0; top: 0; width: 394px; height: 315px; }
.float { position: absolute; display: flex; align-items: center; height: 30px; background: #f0f0f0; border: 1px solid #ddd; }
.grip { width: 4px; height: 28px; background: repeating-linear-gradient(#999 0 1px, #fff 1px 3px); }
.f1 { left: 359px; top: 207px; }
.f2 { left: 155px; top: 315px; }

.right { display: flex; flex-direction: column; padding-right: 1px; }
.right .panel { flex: 1; display: flex; flex-direction: column; }
.right .ptitle { flex: none; }
.tabs { display: flex; align-items: flex-end; margin: 2px 0 0 1px; font: 10px/16px "Liberation Mono", monospace; }
.tabs button { padding: 0 9px; height: 15px; border: 1px solid #d4d4d4; border-left: 0; }
.tabs .act { background: #fff; height: 17px; border: 0; padding: 0 11px; }
.mods { flex: 1; display: flex; flex-direction: column; gap: 6px; margin: 0 4px 7px 1px; padding: 4px 4px 4px 4px; border: 1px solid #e2e2e2; font: 11px/14px "Liberation Sans", Arial, sans-serif; }
.mg { display: grid; grid-template-columns: repeat(3, 1fr); grid-auto-rows: 16px; gap: 2px; }
.fit { flex: 1; grid-auto-rows: 1fr; gap: 1px 2px; }
.mg h3 { grid-column: span 2; text-align: center; font: bold 11px/16px "Liberation Sans", "DejaVu Sans", sans-serif; color: #111; }
.mg.fit h3 { line-height: 14px; }
.mg .solo { grid-column: 1 / 4; padding-right: 86px; }
.mg button { position: relative; min-height: 0; background: #e1e1e1; border: 1px solid #b4b4b4; white-space: nowrap; line-height: 12px; }
.mg .sub { padding-right: 9px; }
.sub::after { content: ""; position: absolute; right: 4px; top: 4px; border: solid transparent; border-width: 3px 0 3px 5px; border-left-color: #111; }
.opts { height: 103px; display: flex; flex-direction: column; }
.optbox { flex: 1; margin: 4px 3px 3px 2px; border: 1px solid #999; background: #fff; }

.info { display: flex; padding-top: 20px; }
.istrip { width: 17px; display: flex; flex-direction: column; align-items: center; justify-content: space-between; padding: 2px 0; background: #dcdcdc; font: 10px/14px "Liberation Mono", monospace; }
.istrip span { writing-mode: vertical-rl; transform: rotate(180deg); }
.ibox { flex: 1; min-width: 0; margin: 0 0 4px 4px; border: 1px solid #999; background: #fff; display: flex; flex-direction: column; }
.irow { flex: 1; display: flex; min-height: 0; }
pre { flex: 1; padding-left: 2px; font: 10px/13px "Liberation Mono", monospace; overflow: hidden; }
.ibox .vs { width: 12px; }
.ibox .full { margin-right: -4px; }

.bottom { display: grid; grid-template-columns: 296fr 286fr 224fr; grid-template-rows: 54px 44px; row-gap: 9px; margin: 2px -1px 3px 0; padding: 14px 0 0 9px; border: 3px solid #d93a34; border-radius: 5px; position: relative; z-index: 2; }
.bottom .drop.on { border-left: 1px solid #a9cdea; }
.duo { display: grid; grid-template-columns: 29px 41px 29px 29px 29px; grid-template-rows: 27px 27px; }
.duo svg { width: 100%; height: 29px; }
.cap { display: flex; flex-direction: column; align-items: center; position: relative; }
.bg .cap svg { height: 15px; }
.cap b { font: bold 12px/12px "Liberation Sans", sans-serif; color: #444; }
.bg .sm b { font-size: 10px; color: #111; padding-right: 5px; }
.bg .cap .tick { position: absolute; right: 0; bottom: 4px; width: 6px; height: 4px; }
.spin { display: flex; align-items: center; width: 40px; height: 16px; border: 1px solid #ddd; background: #f6f6f6; color: #999; font: 10px/14px "Liberation Sans", sans-serif; padding-left: 3px; }
.spin input { flex: 1; width: 20px; background: none; }
.spin svg { width: 8px; height: 14px; margin-right: 2px; }
.pair { display: flex; gap: 10px; }

.meter { position: absolute; z-index: 3; right: 153px; bottom: 53px; display: flex; align-items: center; font-family: "Noto Sans", sans-serif; }
.pill { width: 80px; height: 40px; border-radius: 20px; background: #2c2e3a; padding-left: 27px; display: flex; flex-direction: column; font: bold 11px/20px "Noto Sans", sans-serif; color: #ddd; }
.pill small { font-size: 8px; color: #999; }
.pill i { font: normal 9px/20px "DejaVu Sans", sans-serif; margin-right: 16px; }
.pill .u { color: #2d8ab8; } .pill .d { color: #3c9a5c; }
.disc { position: absolute; left: -32px; width: 56px; height: 56px; border-radius: 50%; background: rgba(52, 55, 70, .88); border: 3px solid #4a8a80; border-left-color: #3c3f4e; border-bottom-color: #7d8858; text-align: center; font-size: 21px; line-height: 46px; color: #9a9caa; }
.disc small { font-size: 9px; }
.mark { position: absolute; z-index: 4; right: 36px; bottom: 35px; color: #fff; font: 42px/58px "Noto Sans CJK SC", sans-serif; white-space: nowrap; text-shadow: 3px 3px 1px #888; }
.zh { font-size: 47px; }
```
